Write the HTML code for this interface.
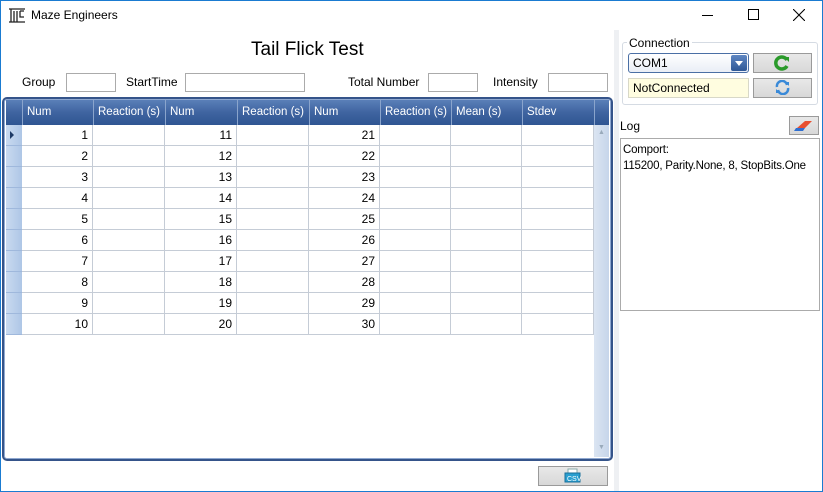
<!DOCTYPE html>
<html><head><meta charset="utf-8"><style>
*{box-sizing:border-box;margin:0;padding:0}
body{width:823px;height:492px;position:relative;background:#fff;font-family:"Segoe UI","Liberation Sans",sans-serif;font-size:12px;color:#000;overflow:hidden}
.a{position:absolute}
.win{left:0;top:0;width:823px;height:492px;border:1px solid #1a7bd1}
.tb{border:1px solid #ababab;background:#fff;height:19px}
.hdr{top:100px;height:25px;background:linear-gradient(#5a7fb8,#3f64a0 50%,#2f5592);color:#fff;font-size:11.5px;line-height:24px}
.hc{position:absolute;top:0;height:25px;border-left:1px solid #8aa4cc;padding-left:4px;white-space:nowrap}
.cell{position:absolute;height:21px;border-right:1px solid #c5ccd6;border-bottom:1px solid #c5ccd6;text-align:right;padding-right:4px;line-height:21px}
.rh{position:absolute;left:6px;width:16px;height:21px;background:linear-gradient(90deg,#c9daf0,#aec6e6);border-bottom:1px solid #9fb8dc}
.btn{background:linear-gradient(#e8e8e8,#d8d8d8);border:1px solid #9a9a9a}
</style></head><body>
<div class="a win"></div>
<svg class="a" style="left:8px;top:7px" width="18" height="16" viewBox="0 0 18 16"><g fill="none" stroke="#222" stroke-width="1.3"><path d="M1 2h16M1 15h16M3 2v13M6 4v11M9 4v11M12 4h4M12 4v6h4"/></g></svg>
<div class="a" style="left:31px;top:8px;font-size:12px">Maze Engineers</div>
<div class="a" style="left:702px;top:15px;width:11px;height:1px;background:#000"></div>
<div class="a" style="left:748px;top:9px;width:11px;height:11px;border:1px solid #000"></div>
<svg class="a" style="left:793px;top:9px" width="12" height="12"><path d="M0 0L12 12M12 0L0 12" stroke="#000" stroke-width="1.1"/></svg>

<div class="a" style="left:251px;top:39px;font-size:19px">Tail Flick Test</div>
<div class="a" style="left:22px;top:75px">Group</div>
<div class="a tb" style="left:66px;top:73px;width:50px"></div>
<div class="a" style="left:126px;top:75px">StartTime</div>
<div class="a tb" style="left:185px;top:73px;width:120px"></div>
<div class="a" style="left:348px;top:75px">Total Number</div>
<div class="a tb" style="left:428px;top:73px;width:50px"></div>
<div class="a" style="left:493px;top:75px">Intensity</div>
<div class="a tb" style="left:548px;top:73px;width:60px"></div>

<div class="a" style="left:2px;top:97px;width:611px;height:364px;border:2px solid #35548a;border-radius:5px;background:#fff;box-shadow:inset 0 0 0 1px #8fa8d0"></div>
<div class="a hdr" style="left:6px;width:603px">
 <div class="hc" style="left:0;width:16px;border-left:none"></div>
 <div class="hc" style="left:16px">Num</div>
 <div class="hc" style="left:87px">Reaction (s)</div>
 <div class="hc" style="left:159px">Num</div>
 <div class="hc" style="left:231px">Reaction (s)</div>
 <div class="hc" style="left:303px">Num</div>
 <div class="hc" style="left:374px">Reaction (s)</div>
 <div class="hc" style="left:445px">Mean (s)</div>
 <div class="hc" style="left:516px">Stdev</div>
 <div class="hc" style="left:588px"></div>
</div>
<div class="a" style="left:594px;top:125px;width:15px;height:332px;background:linear-gradient(90deg,#dbe5f2,#c6d5ea)"></div>
<div class="a" style="left:598px;top:129px;font-size:7px;color:#9ab">▲</div>
<div class="a" style="left:598px;top:444px;font-size:7px;color:#9ab">▼</div>
<div id="rows"></div>
<script>
var h='',cols=[[22,71],[93,72],[165,72],[237,72],[309,71],[380,71],[451,71],[522,72]];
for(var r=0;r<10;r++){var t=125+r*21;
h+='<div class="rh" style="top:'+t+'px"></div>';
cols.forEach(function(c,i){var v=i==0?r+1:i==2?r+11:i==4?r+21:'';
h+='<div class="cell" style="left:'+c[0]+'px;top:'+t+'px;width:'+c[1]+'px">'+v+'</div>';});}
h+='<div class="a" style="left:10px;top:131px;width:0;height:0;border-left:4px solid #1e3a66;border-top:4px solid transparent;border-bottom:4px solid transparent"></div>';
document.getElementById('rows').innerHTML=h;
</script>
<div class="a btn" style="left:538px;top:466px;width:70px;height:20px"></div>
<svg class="a" style="left:564px;top:468px" width="18" height="16"><rect x="4" y="1" width="9" height="6" fill="#fff" stroke="#8aa"/><rect x="1" y="5" width="15" height="9" fill="#2a9fd0" stroke="#1a6f9a"/><text x="3" y="13" font-size="7" fill="#fff" font-family="Liberation Sans">CSV</text></svg>

<div class="a" style="left:614px;top:30px;width:5px;height:461px;background:#eef0f3"></div>

<div class="a" style="left:622px;top:42px;width:196px;height:63px;border:1px solid #d5dbe3;border-radius:3px"></div>
<div class="a" style="left:627px;top:36px;background:#fff;padding:0 2px">Connection</div>
<div class="a" style="left:628px;top:53px;width:121px;height:20px;border:1px solid #4a6fa5;border-radius:3px;background:linear-gradient(#fff,#e9eef6);padding:1px 4px;line-height:17px">COM1</div>
<div class="a" style="left:731px;top:55px;width:16px;height:16px;background:linear-gradient(#5e86c2,#2f5896);border-radius:2px"></div>
<div class="a" style="left:735px;top:61px;width:0;height:0;border-top:5px solid #fff;border-left:4px solid transparent;border-right:4px solid transparent"></div>
<div class="a" style="left:628px;top:78px;width:121px;height:20px;background:#fffde0;border:1px solid #d8d8c8;padding:1px 4px;line-height:17px">NotConnected</div>
<div class="a btn" style="left:753px;top:53px;width:59px;height:20px"></div>
<svg class="a" style="left:774px;top:55px" width="16" height="16"><path d="M13 5A6 6 0 1 0 13 11" fill="none" stroke="#2a9a2a" stroke-width="3.5"/><path d="M10 2l5 0 0 5z" fill="#2a9a2a"/></svg>
<div class="a btn" style="left:753px;top:78px;width:59px;height:20px"></div>
<svg class="a" style="left:775px;top:80px" width="15" height="15"><path d="M2 7A5 5 0 0 1 12 5M13 8A5 5 0 0 1 3 10" fill="none" stroke="#3a8ad8" stroke-width="2.5"/><path d="M10 2h4v4zM5 13H1V9z" fill="#3a8ad8"/></svg>
<div class="a" style="left:620px;top:119px">Log</div>
<div class="a btn" style="left:789px;top:116px;width:30px;height:19px"></div>
<svg class="a" style="left:794px;top:118px" width="20" height="15"><path d="M3 10L11 3h7l-7 7z" fill="#e85030"/><path d="M2 10h9l-2 3H0z" fill="#2f6fd0"/></svg>
<div class="a" style="left:620px;top:138px;width:200px;height:173px;border:1px solid #ababab;padding:3px 2px;line-height:16px;font-size:11.5px;white-space:nowrap;letter-spacing:-0.2px;overflow:hidden">Comport:<br>115200, Parity.None, 8, StopBits.One</div>
</body></html>
